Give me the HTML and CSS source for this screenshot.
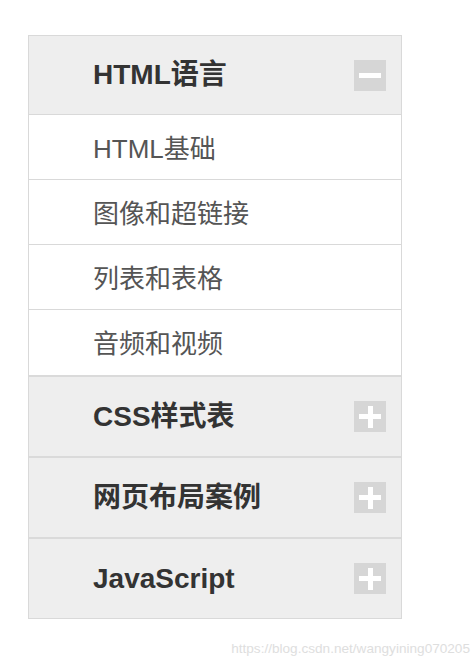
FILE: index.html
```html
<!DOCTYPE html>
<html lang="zh">
<head>
<meta charset="utf-8">
<link rel="stylesheet" href="styles.css">
</head>
<body>
<div class="menu">
  <div class="group open">
    <div class="head"><span class="title">HTML语言</span><span class="tog minus"></span></div>
    <ul class="items">
      <li>HTML基础</li>
      <li>图像和超链接</li>
      <li>列表和表格</li>
      <li>音频和视频</li>
    </ul>
  </div>
  <div class="group">
    <div class="head"><span class="title">CSS样式表</span><span class="tog plus"></span></div>
  </div>
  <div class="group">
    <div class="head"><span class="title">网页布局案例</span><span class="tog plus"></span></div>
  </div>
  <div class="group">
    <div class="head"><span class="title">JavaScript</span><span class="tog plus"></span></div>
  </div>
</div>
<div class="mark">https://blog.csdn.net/wangyining070205</div>
</body>
</html>
```

FILE: styles.css
```css
html, body {
  margin: 0;
  padding: 0;
  background: #ffffff;
}
body {
  font-family: "Liberation Sans", "Noto Sans CJK SC", sans-serif;
  width: 474px;
  height: 671px;
  overflow: hidden;
  position: relative;
}
.menu {
  margin: 35px 0 0 28px;
  width: 372px;
  border: 1px solid #d9d9d9;
}
.group + .group {
  border-top: 2px solid #dadada;
}
.head {
  height: 79px;
  background: #eeeeee;
  display: flex;
  align-items: center;
  justify-content: space-between;
  padding: 0 15px 0 64px;
  box-sizing: border-box;
}
.group.open .head {
  border-bottom: 1px solid #d9d9d9;
}
.title {
  font-size: 28px;
  font-weight: bold;
  color: #333333;
  line-height: 1;
}
.tog {
  width: 32px;
  height: 31px;
  background: #d6d6d6;
  position: relative;
  flex: none;
}
.tog::before,
.tog::after {
  content: "";
  position: absolute;
  background: #ffffff;
}
.tog::before {
  left: 5px;
  top: 13px;
  width: 22px;
  height: 5px;
}
.plus::after {
  left: 13.5px;
  top: 4.5px;
  width: 5px;
  height: 22px;
}
.items {
  list-style: none;
  margin: 0;
  padding: 0;
  background: #ffffff;
}
.items li {
  height: 65px;
  display: flex;
  align-items: center;
  padding: 3px 0 0 64px;
  box-sizing: border-box;
  font-size: 26px;
  line-height: 1;
  color: #555555;
  border-bottom: 1px solid #d9d9d9;
}
.items li:last-child {
  border-bottom: none;
  height: 65px;
}
.mark {
  position: absolute;
  right: 4px;
  top: 641px;
  font-size: 13.6px;
  color: #dedede;
}
```
